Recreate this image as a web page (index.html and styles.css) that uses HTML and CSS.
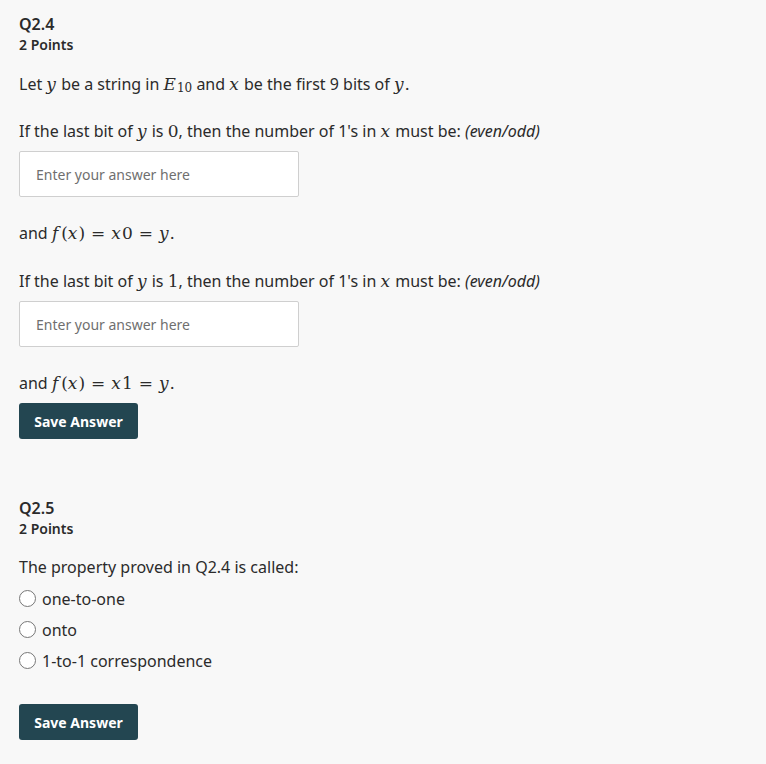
FILE: index.html
```html
<!DOCTYPE html>
<html>
<head>
<meta charset="utf-8">
<link rel="stylesheet" href="styles.css">
</head>
<body>
<div class="page">
  <section class="question q1">
    <div class="qtitle">Q2.4</div>
    <div class="qpoints">2 Points</div>
    <p class="text t-first">Let <span class="m">y</span> be a string in <span class="m">E</span><span class="sub">10</span> and <span class="m">x</span> be the first 9 bits of <span class="m">y</span><span class="mr">.</span></p>
    <p class="text t-mid1">If the last bit of <span class="m">y</span> is <span class="mr">0</span>, then the number of 1's in <span class="m">x</span> must be: <em>(even/odd)</em></p>
    <input class="answer" type="text" placeholder="Enter your answer here">
    <p class="text t-after">and <span class="m f">f</span><span class="mr">(</span><span class="m">x</span><span class="mr">)</span><span class="mr rel">=</span><span class="m">x</span><span class="mr">0</span><span class="mr rel">=</span><span class="m">y</span><span class="mr">.</span></p>
    <p class="text t-mid2">If the last bit of <span class="m">y</span> is <span class="mr">1</span>, then the number of 1's in <span class="m">x</span> must be: <em>(even/odd)</em></p>
    <input class="answer" type="text" placeholder="Enter your answer here">
    <p class="text t-after">and <span class="m f">f</span><span class="mr">(</span><span class="m">x</span><span class="mr">)</span><span class="mr rel">=</span><span class="m">x</span><span class="mr">1</span><span class="mr rel">=</span><span class="m">y</span><span class="mr">.</span></p>
    <button class="save">Save Answer</button>
  </section>
  <section class="question q2">
    <div class="qtitle">Q2.5</div>
    <div class="qpoints">2 Points</div>
    <p class="text t-first2">The property proved in Q2.4 is called:</p>
    <ul class="options">
      <li><span class="radio"></span>one-to-one</li>
      <li><span class="radio"></span>onto</li>
      <li><span class="radio"></span>1-to-1 correspondence</li>
    </ul>
    <button class="save save2">Save Answer</button>
  </section>
</div>
</body>
</html>
```

FILE: styles.css
```css
html, body {
  margin: 0;
  padding: 0;
  background: #f8f8f8;
}
body {
  font-family: "Noto Sans", "Open Sans", sans-serif;
  color: #2b2b2b;
}
.page {
  padding: 14px 19px 0 19px;
}
.question {
  display: flex;
  flex-direction: column;
  align-items: flex-start;
}
.qtitle {
  font-size: 16px;
  font-weight: 600;
  line-height: 20px;
}
.qpoints {
  font-size: 14px;
  font-weight: 600;
  line-height: 18px;
  margin-top: 2px;
}
.text {
  font-size: 16px;
  line-height: 22px;
  height: 22px;
  margin: 0;
  white-space: nowrap;
}
.t-first { margin-top: 19px; }
.t-mid1 { margin-top: 25px; }
.t-mid2 { margin-top: 26px; }
.t-after { margin-top: 25px; }
.t-first2 { margin-top: 18px; }
.m, .mr, .sub {
  font-family: "DejaVu Serif", "Liberation Serif", serif;
  line-height: 1;
}
.m {
  font-style: italic;
  font-size: 17px;
  padding-right: 1px;
}
.m.f {
  padding-right: 3px;
}
.mr {
  font-size: 17px;
}
.rel {
  padding: 0 6px;
}
.sub {
  font-size: 12px;
  vertical-align: -2px;
}
em {
  font-style: italic;
}
.answer {
  margin-top: 9px;
  width: 280px;
  height: 46px;
  box-sizing: border-box;
  border: 1px solid #cfcfcf;
  border-radius: 2px;
  background: #fff;
  padding: 0 16px;
  font-family: "Noto Sans", "Open Sans", sans-serif;
  font-size: 14px;
  color: #333;
}
.answer::placeholder {
  color: #6f6f6f;
}
.save {
  margin-top: 9px;
  height: 36px;
  width: 119px;
  border: none;
  border-radius: 3px;
  background: #234651;
  color: #fff;
  font-family: "Noto Sans", "Open Sans", sans-serif;
  font-size: 14px;
  font-weight: 700;
  padding: 0;
}
.q2 {
  margin-top: 59px;
}
.options {
  list-style: none;
  margin: 5px 0 0 0;
  padding: 0;
}
.options li {
  display: flex;
  align-items: center;
  gap: 6px;
  font-size: 16px;
  height: 31px;
}
.radio {
  width: 15px;
  height: 15px;
  border: 1px solid #777;
  border-radius: 50%;
  background: #fff;
}
.save2 {
  margin-top: 28px;
}
```
